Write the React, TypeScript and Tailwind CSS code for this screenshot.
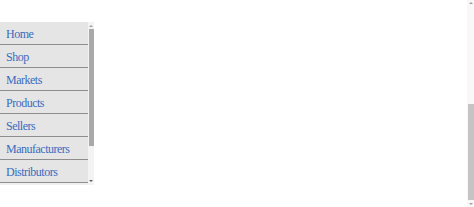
import React from "react";

const links = [
  "Home",
  "Shop",
  "Markets",
  "Products",
  "Sellers",
  "Manufacturers",
  "Distributors",
];

export default function App() {
  return (
    <div className="flex h-[207px] w-[474px] bg-white">
      <div className="flex-1 pt-[22px]">
        <nav className="flex h-[163px] w-[94px] bg-[#f0f0f0]">
          <ul className="w-[88px] overflow-hidden font-['Liberation_Serif',serif] text-[12px] tracking-[-0.5px]">
            {links.map((l) => (
              <li
                key={l}
                className="flex h-[23px] items-center border-b border-[#8e8e8e] bg-[#e5e5e5] pl-[6px] pt-[1px] text-[#3a6cc0]"
              >
                {l}
              </li>
            ))}
          </ul>
          {/* sidebar scrollbar */}
          <div className="flex w-[6px] flex-col items-center bg-[#f3f3f3]">
            <div className="mt-[3px] h-0 w-0 border-x-[2px] border-b-[2px] border-x-transparent border-b-[#a0a0a0]" />
            <div className="mt-[2px] h-[117px] w-[5px] bg-[#a9a9a9]" />
            <div className="mt-auto mb-[3px] h-0 w-0 border-x-[2px] border-t-[2px] border-x-transparent border-t-[#606060]" />
          </div>
        </nav>
      </div>
      {/* page scrollbar */}
      <div className="flex w-[7px] flex-col items-center bg-[#f8f8f8]">
        <div className="mt-[2px] h-0 w-0 border-x-[2px] border-b-[2px] border-x-transparent border-b-[#a0a0a0]" />
        <div className="mt-[100px] h-[96px] w-[6px] bg-[#c4c4c4]" />
        <div className="mt-auto mb-[2px] h-0 w-0 border-x-[2px] border-t-[2px] border-x-transparent border-t-[#a0a0a0]" />
      </div>
    </div>
  );
}
